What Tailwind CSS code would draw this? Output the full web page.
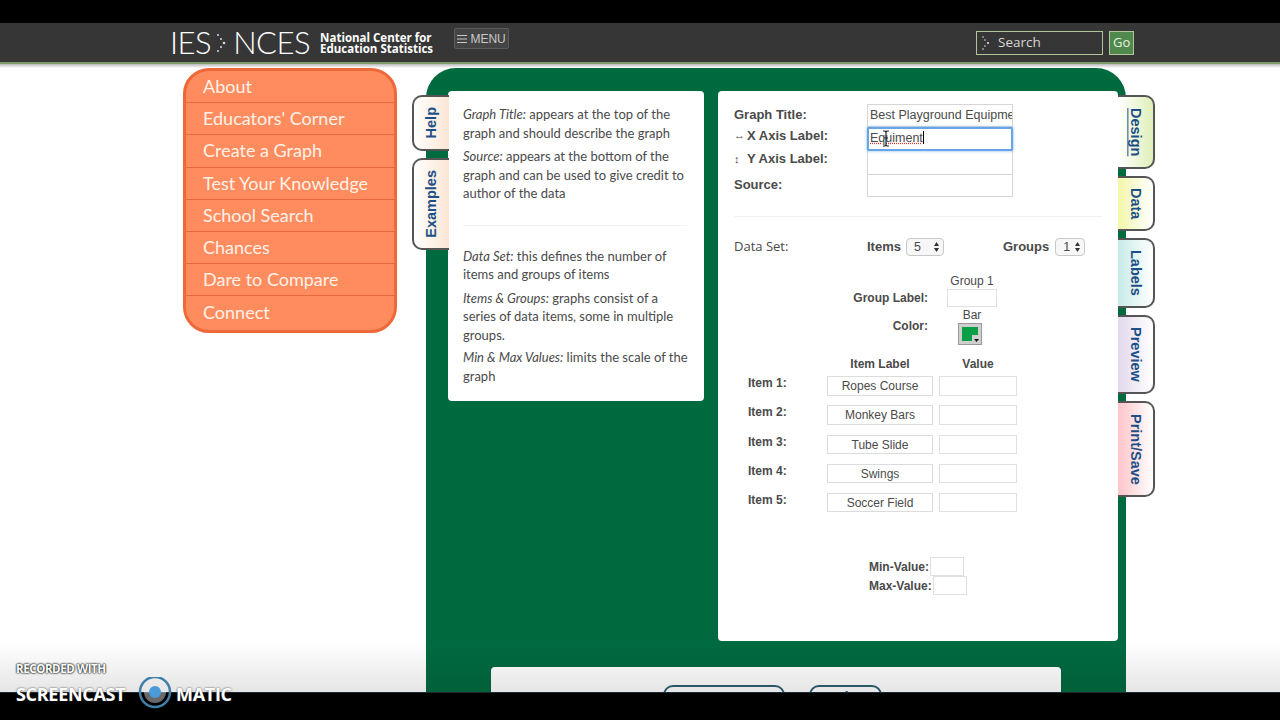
<!DOCTYPE html>
<html lang="en">
<head>
  <meta charset="UTF-8">
  <meta name="viewport" content="width=device-width, initial-scale=1.0">
  <title>Create a Graph | NCES</title>
  <script src="https://cdn.jsdelivr.net/npm/@tailwindcss/browser@4"></script>
</head>
<body class="bg-white">
<div class="relative w-[1280px] h-[720px] overflow-hidden bg-white font-['Liberation_Sans',sans-serif]">

  <!-- top bar -->
  <div class="h-[23px] bg-black"></div>
  <header class="h-[39px] bg-[#363636] flex items-center pl-[170px]">
    <span class="font-['Lato',sans-serif] font-light text-[31px] leading-none text-white tracking-[-0.5px]">IES</span>
    <svg class="w-[22px] h-[24px]" viewBox="0 0 22 24" fill="#d8d8d8">
      <circle cx="7" cy="4" r="1"/><circle cx="10" cy="8" r="1"/><circle cx="13" cy="12" r="1.3"/><circle cx="10" cy="16" r="1"/><circle cx="7" cy="20" r="1"/>
    </svg>
    <span class="font-['Lato',sans-serif] font-light text-[31px] leading-none text-white tracking-[-0.5px]">NCES</span>
    <div class="ml-[10px] w-[124px] font-['Open_Sans',sans-serif] font-bold text-[11.5px] leading-[11px] text-white">National Center for<br>Education Statistics</div>
    <div class="ml-[10px] mb-[8px] w-[55px] h-[21px] rounded-[2px] border border-[#5c5c5c] bg-[#444] flex items-center justify-center gap-[3px] text-[12px] text-[#c9c9c9]">
      <svg class="w-[10px] h-[10px]" viewBox="0 0 10 10" stroke="#c9c9c9" stroke-width="1"><path d="M0 1.5h10M0 5h10M0 8.5h10"/></svg>
      MENU
    </div>
    <div class="ml-[467px] w-[127px] h-[24px] border border-[#b4c49a] flex items-center pl-[3px] gap-[6px] font-['Open_Sans',sans-serif] text-[13.5px] text-[#d8d8d8]">
      <svg class="w-[12px] h-[16px]" viewBox="0 0 12 16" fill="#e0e0e0">
        <circle cx="3" cy="2" r="0.8"/><circle cx="5" cy="5" r="0.8"/><circle cx="8" cy="8" r="1.1"/><circle cx="5" cy="11" r="0.8"/><circle cx="3" cy="14" r="0.8"/>
      </svg>
      Search
    </div>
    <div class="ml-[6px] w-[25px] h-[24px] border border-[#b4c49a] bg-[#4f8a4c] flex items-center justify-center font-['Open_Sans',sans-serif] text-[13px] text-[#e8f0e0]">Go</div>
  </header>
  <div class="h-[2px] bg-[#7f9a68]"></div>
  <div class="h-[4px] bg-gradient-to-b from-[#b9b9b9] to-white"></div>

  <main class="flex items-start pl-[183px]">
    <!-- side menu -->
    <nav class="w-[214px] h-[265px] rounded-[26px] border-[3px] border-[#ee683a] bg-[#ff8c5e] overflow-hidden font-['Lato',sans-serif] text-[18px] text-[#fff1e8] divide-y divide-[#e9693c]">
      <div class="h-[32.2px] pl-[17px] flex items-center">About</div>
      <div class="h-[32.2px] pl-[17px] flex items-center">Educators' Corner</div>
      <div class="h-[32.2px] pl-[17px] flex items-center">Create a Graph</div>
      <div class="h-[32.2px] pl-[17px] flex items-center">Test Your Knowledge</div>
      <div class="h-[32.2px] pl-[17px] flex items-center">School Search</div>
      <div class="h-[32.2px] pl-[17px] flex items-center">Chances</div>
      <div class="h-[32.2px] pl-[17px] flex items-center">Dare to Compare</div>
      <div class="h-[32.2px] pl-[17px] flex items-center">Connect</div>
    </nav>

    <!-- green panel -->
    <section class="relative ml-[29px] w-[700px] h-[640px] rounded-t-[30px] bg-[#006a3f] pt-[23px]">

      <!-- left tabs -->
      <div class="absolute left-[-14px] top-[27px] flex flex-col gap-[7px] text-[14.5px] font-bold text-[#1c4f86]">
        <div class="w-[37px] h-[56px] flex items-center justify-center rounded-l-[10px] border-2 border-r-0 border-[#555] bg-gradient-to-r from-white to-[#fbe6d4]"><span class="[writing-mode:vertical-rl] rotate-180">Help</span></div>
        <div class="w-[37px] h-[92px] flex items-center justify-center rounded-l-[10px] border-2 border-r-0 border-[#555] bg-gradient-to-r from-white to-[#fbe6d4]"><span class="[writing-mode:vertical-rl] rotate-180">Examples</span></div>
      </div>

      <!-- right tabs -->
      <div class="absolute left-[692px] top-[27px] flex flex-col gap-[7px] text-[14.5px] font-bold text-[#1c4f86]">
        <div class="w-[37px] h-[74px] flex items-center justify-center rounded-r-[10px] border-2 border-l-0 border-[#555] bg-gradient-to-r from-white to-[#dff0b8]"><span class="[writing-mode:vertical-rl] underline">Design</span></div>
        <div class="w-[37px] h-[55px] flex items-center justify-center rounded-r-[10px] border-2 border-l-0 border-[#555] bg-gradient-to-r from-[#f2f7a8] to-white"><span class="[writing-mode:vertical-rl]">Data</span></div>
        <div class="w-[37px] h-[70px] flex items-center justify-center rounded-r-[10px] border-2 border-l-0 border-[#555] bg-gradient-to-r from-[#c6ebe6] to-white"><span class="[writing-mode:vertical-rl]">Labels</span></div>
        <div class="w-[37px] h-[79px] flex items-center justify-center rounded-r-[10px] border-2 border-l-0 border-[#555] bg-gradient-to-r from-[#e2d8ec] to-white"><span class="[writing-mode:vertical-rl]">Preview</span></div>
        <div class="w-[37px] h-[96px] flex items-center justify-center rounded-r-[10px] border-2 border-l-0 border-[#555] bg-gradient-to-r from-[#fdc4c8] to-white"><span class="[writing-mode:vertical-rl]">Print/Save</span></div>
      </div>

      <div class="flex items-start pl-[22px]">
        <!-- help card -->
        <div class="w-[256px] h-[310px] rounded-[4px] bg-white pl-[15px] pr-[10px] pt-[14px] font-['Lato',sans-serif] text-[13px] leading-[18.5px] text-[#4a4a4a]">
          <p><i>Graph Title:</i> appears at the top of the graph and should describe the graph</p>
          <p class="mt-[5px]"><i>Source:</i> appears at the bottom of the graph and can be used to give credit to author of the data</p>
          <div class="mt-[22px] mr-[8px] h-px bg-[#f2f2f2]"></div>
          <p class="mt-[21px]"><i>Data Set:</i> this defines the number of items and groups of items</p>
          <p class="mt-[5px]"><i>Items &amp; Groups:</i> graphs consist of a series of data items, some in multiple groups.</p>
          <p class="mt-[4px]"><i>Min &amp; Max Values:</i> limits the scale of the graph</p>
        </div>

        <!-- design form -->
        <div class="ml-[14px] w-[400px] h-[550px] rounded-[4px] bg-white pl-[16px] pt-[13px] text-[#4a4a4a]">
          <div class="grid grid-cols-[133px_146px] auto-rows-[23.3px] text-[13px] font-bold">
            <div class="pt-[1px]">Graph Title:</div>
            <div class="border border-[#d6d6d6] px-[2px] overflow-hidden whitespace-nowrap font-normal text-[12.5px] leading-[21px]">Best Playground Equipment</div>
            <div class="flex items-center gap-[3px] pb-[7px]"><span class="font-normal text-[11px] w-[10px]">↔</span>X Axis Label:</div>
            <div class="relative border-2 border-[#67a5e6] rounded-[1px] shadow-[0_0_3px_#7fb4ec] px-[1px] font-normal text-[12.5px] leading-[19px] whitespace-nowrap"><span class="underline decoration-dotted decoration-[#e03030]">Equiment</span><span class="inline-block w-px h-[13px] bg-black align-[-2px]"></span>
              <svg class="absolute left-[13px] top-[1px] w-[8px] h-[17px]" viewBox="0 0 8 17" fill="none" stroke="#222" stroke-width="1.2"><path d="M1 1h2l1 1 1-1h2M4 2v13M1 16h2l1-1 1 1h2M2 8h4"/></svg>
            </div>
            <div class="flex items-center gap-[3px] pb-[7px]"><span class="font-normal text-[11px] w-[10px]">↕</span>Y Axis Label:</div>
            <div class="border-x border-[#d6d6d6]"></div>
            <div class="pt-[1px]">Source:</div>
            <div class="border border-[#d6d6d6]"></div>
          </div>

          <div class="mt-[19px] mr-[16px] h-px bg-[#f2f2f2]"></div>

          <div class="mt-[21px] flex items-center h-[18px] text-[12.5px]">
            <span class="w-[133px] text-[13px] font-['Open_Sans',sans-serif]">Data Set:</span>
            <span class="font-bold text-[13px]">Items</span>
            <div class="ml-[5px] w-[38px] h-[18px] rounded-[4px] border border-[#c8c8c8] bg-[#f7f7f7] flex items-center justify-between pl-[7px] pr-[3px]">5
              <svg class="w-[7px] h-[12px]" viewBox="0 0 7 12" fill="#333"><path d="M3.5 1 6 5H1zM3.5 11 1 7h5z"/></svg>
            </div>
            <span class="ml-[59px] font-bold text-[13px]">Groups</span>
            <div class="ml-[6px] w-[30px] h-[18px] rounded-[4px] border border-[#c8c8c8] bg-[#f7f7f7] flex items-center justify-between pl-[7px] pr-[3px]">1
              <svg class="w-[7px] h-[12px]" viewBox="0 0 7 12" fill="#333"><path d="M3.5 1 6 5H1zM3.5 11 1 7h5z"/></svg>
            </div>
          </div>

          <div class="mt-[18px] ml-[213px] w-[50px] text-center text-[12px] leading-[15px]">Group 1</div>
          <div class="flex items-center h-[18px]">
            <span class="w-[194px] text-right pr-[0px] text-[12px] font-bold">Group Label:</span>
            <div class="ml-[19px] w-[50px] h-[18px] border border-[#e0e0e0]"></div>
          </div>
          <div class="mt-[1px] ml-[213px] w-[50px] text-center text-[12px] leading-[15px]">Bar</div>
          <div class="flex items-start h-[22px]">
            <span class="w-[194px] text-right text-[12px] font-bold leading-[14px] mt-[-4px]">Color:</span>
            <div class="relative ml-[30px] w-[24px] h-[22px] border border-[#999] bg-[#cfcfcf] p-[3px]">
              <div class="h-full bg-[#0a9e45]"></div>
              <div class="absolute right-[1px] bottom-[1px] w-[8px] h-[8px] bg-[#cfcfcf] flex items-end justify-center pb-[1px]">
                <svg class="w-[5px] h-[3px]" viewBox="0 0 5 3" fill="#111"><path d="M0 0h5L2.500 3z"/></svg>
              </div>
            </div>
          </div>

          <div class="mt-[12px] ml-[14px] grid grid-cols-[73px_106px_78px] gap-x-[6px] items-center text-[12px]">
            <div></div><div class="text-center font-bold leading-[14px]">Item Label</div><div class="text-center font-bold leading-[14px]">Value</div>
          </div>
          <div class="mt-[5px] ml-[14px] grid grid-cols-[73px_106px_78px] gap-x-[6px] auto-rows-[19.5px] gap-y-[9.7px] text-[12px]">
            <div class="font-bold leading-[14px]">Item 1:</div><div class="border border-[#dcdcdc] text-center leading-[18px]">Ropes Course</div><div class="border border-[#e0e0e0]"></div>
            <div class="font-bold leading-[14px]">Item 2:</div><div class="border border-[#dcdcdc] text-center leading-[18px]">Monkey Bars</div><div class="border border-[#e0e0e0]"></div>
            <div class="font-bold leading-[14px]">Item 3:</div><div class="border border-[#dcdcdc] text-center leading-[18px]">Tube Slide</div><div class="border border-[#e0e0e0]"></div>
            <div class="font-bold leading-[14px]">Item 4:</div><div class="border border-[#dcdcdc] text-center leading-[18px]">Swings</div><div class="border border-[#e0e0e0]"></div>
            <div class="font-bold leading-[14px]">Item 5:</div><div class="border border-[#dcdcdc] text-center leading-[18px]">Soccer Field</div><div class="border border-[#e0e0e0]"></div>
          </div>

          <div class="mt-[45px] ml-[135px] grid grid-cols-[48px_34px] w-[100px] justify-start text-[12px] font-bold">
          </div>
          <div class="ml-[135px] flex items-center h-[19px] text-[12px] font-bold">Min-Value:<div class="ml-[1px] w-[34px] h-[19px] border border-[#e0e0e0]"></div></div>
          <div class="ml-[135px] flex items-center h-[19px] text-[12px] font-bold">Max-Value:<div class="ml-[1px] w-[34px] h-[19px] border border-[#e0e0e0]"></div></div>
        </div>
      </div>

      <!-- action card, cut off by the recording bar -->
      <div class="ml-[65px] mt-[26px] w-[570px] h-[60px] rounded-[4px] bg-white flex justify-center gap-[24px] pt-[18px] pr-[8px] text-[14px] font-bold text-[#1c4f5f]">
        <div class="w-[122px] h-[30px] rounded-[10px] border-2 border-[#2f5f70] text-center leading-[20px]">Start Over</div>
        <div class="w-[73px] h-[30px] rounded-[10px] border-2 border-[#2f5f70] text-center leading-[20px]">Update</div>
      </div>
    </section>
  </main>

  <!-- recording overlay -->
  <div class="absolute left-0 right-0 bottom-[28px] h-[50px] bg-gradient-to-b from-transparent to-black/10"></div>
  <div class="absolute left-0 right-0 bottom-0 h-[28px] bg-black border-t border-[#1d2a33]"></div>
  <div class="absolute left-[16px] top-[661px] font-['Open_Sans',sans-serif] font-bold text-[11.5px] leading-[15px] tracking-[-0.4px] text-white [text-shadow:0_0_2px_#000,0_0_2px_#000]">RECORDED WITH</div>
  <div class="absolute left-[16px] top-[677px] flex items-center font-['Open_Sans',sans-serif] font-bold text-[18px] leading-[30px] tracking-[-0.3px] text-white [text-shadow:0_0_2px_#333]">
    <span class="w-[122px]">SCREENCAST</span>
    <svg class="w-[34px] h-[34px]" viewBox="0 0 34 34" fill="none"><circle cx="17" cy="15" r="15" stroke="#3f7fa8" stroke-width="2.5"/><circle cx="17" cy="15" r="11" fill="#e8e8e8" fill-opacity="0.45"/><circle cx="17" cy="15" r="6" fill="#4b9ad8"/></svg>
    <span class="ml-[4px]">MATIC</span>
  </div>
</div>
</body>
</html>
